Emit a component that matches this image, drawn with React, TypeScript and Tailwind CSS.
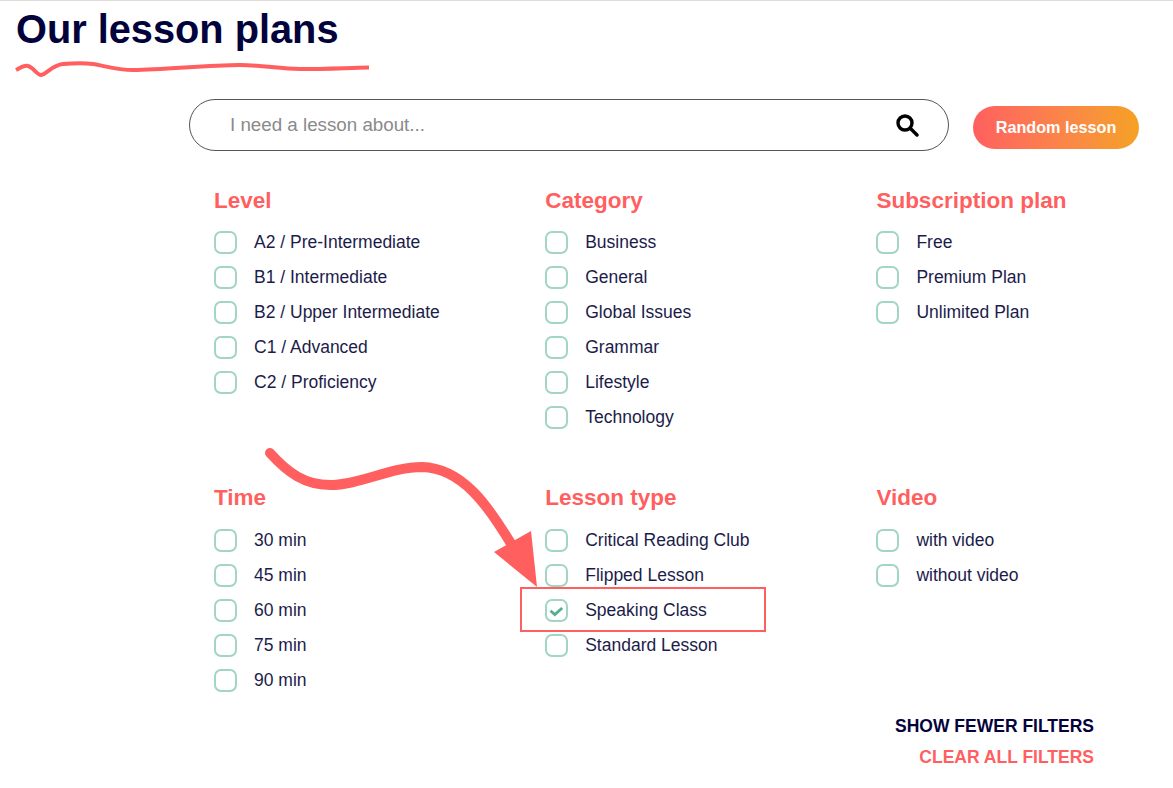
import React from "react";

const groupsTop = [
  { title: "Level", items: ["A2 / Pre-Intermediate", "B1 / Intermediate", "B2 / Upper Intermediate", "C1 / Advanced", "C2 / Proficiency"] },
  { title: "Category", items: ["Business", "General", "Global Issues", "Grammar", "Lifestyle", "Technology"] },
  { title: "Subscription plan", items: ["Free", "Premium Plan", "Unlimited Plan"] },
];
const groupsBottom = [
  { title: "Time", items: ["30 min", "45 min", "60 min", "75 min", "90 min"] },
  { title: "Lesson type", items: ["Critical Reading Club", "Flipped Lesson", "Speaking Class", "Standard Lesson"] },
  { title: "Video", items: ["with video", "without video"] },
];

function Row({ label }: { label: string }) {
  const checked = label === "Speaking Class";
  return (
    <div className="flex h-[35px] items-center">
      <span className="mt-[2px] flex h-[23px] w-[23px] shrink-0 items-center justify-center rounded-[7px] border-2 border-[#a3d5c3] bg-white">
        {checked && (
          <svg width="15" height="12" viewBox="0 0 15 12" fill="none">
            <path d="M1.5 5.8 L5.8 9.6 L13.2 3" stroke="#55ad92" strokeWidth="2.8" />
          </svg>
        )}
      </span>
      <span className="ml-[17px] whitespace-nowrap text-[17.5px] leading-[22px] text-[#1c1c4a]">{label}</span>
    </div>
  );
}

function Group({ title, items, listClass }: { title: string; items: string[]; listClass: string }) {
  return (
    <div>
      <h3 className="text-[22.5px] font-bold leading-[28px] text-[#ff5f5f]">{title}</h3>
      <div className={listClass}>
        {items.map((i) => (
          <Row key={i} label={i} />
        ))}
      </div>
    </div>
  );
}

export default function App() {
  return (
    <div className="relative h-[788px] w-[1173px] overflow-hidden border-t border-[#dcdcdc] bg-white font-['Liberation_Sans',Arial,sans-serif]">
      <h1 className="pl-[16px] pt-[6px] text-[39.75px] font-bold leading-[44px] text-[#03033c]">Our lesson plans</h1>

      <div className="mt-[48px] flex items-center pl-[189px]">
        <div className="flex h-[52px] w-[760px] items-center justify-between rounded-full border border-[#555555] pl-[40px] pr-[29px]">
          <span className="text-[18.75px] text-[#8a8a8a]">I need a lesson about...</span>
          <svg width="24" height="24" viewBox="0 0 24 24" fill="none" stroke="#000" strokeWidth="3.4">
            <circle cx="10" cy="10" r="7" />
            <path d="M15.5 15.5 L22 22" strokeLinecap="round" />
          </svg>
        </div>
        <button className="ml-[24px] mt-[4px] h-[43px] w-[166px] rounded-full bg-gradient-to-r from-[#ff5f5f] to-[#f5a123] text-[16.2px] font-bold text-white">
          Random lesson
        </button>
      </div>

      <div className="ml-[214px] mt-[36px] grid grid-cols-[331.2px_331.2px_1fr]">
        {groupsTop.map((g) => (
          <Group key={g.title} {...g} listClass="mt-[9px]" />
        ))}
      </div>
      <div className="ml-[214px] mt-[50px] grid grid-cols-[331.2px_331.2px_1fr]">
        {groupsBottom.map((g) => (
          <Group key={g.title} {...g} listClass="mt-[10px]" />
        ))}
      </div>

      <div className="mr-[79px] mt-[14px] flex flex-col items-end">
        <span className="text-[17.5px] font-bold leading-[31px] text-[#03033c]">SHOW FEWER FILTERS</span>
        <span className="text-[17.5px] font-bold leading-[31px] text-[#ff5f5f]">CLEAR ALL FILTERS</span>
      </div>

      <div className="absolute left-[520px] top-[586px] h-[45px] w-[246px] border-2 border-[#ff5f5f]" />
      <svg className="absolute left-0 top-[-1px]" width="1173" height="788" viewBox="0 0 1173 788" fill="none">
        <path
          d="M16 70 C20 68 24 65 28 66 C33 67 37 75 41 75 C47 74 52 65 63 64 C75 63 85 63 93 64 C105 66 118 70 133 70 C165 70 205 65 240 65 C262 65 280 69 300 69 C325 69 345 68 369 67.5"
          stroke="#ff5f5f"
          strokeWidth="4"
        />
        <path
          d="M270 453 C288 473 305 485 330 485 C360 485 390 467 422 467 C462 468 488 505 513 547"
          stroke="#ff5f5f"
          strokeWidth="10"
          strokeLinecap="round"
        />
        <path d="M494 552 L531 531 L537 587 Z" fill="#ff5f5f" />
      </svg>
    </div>
  );
}
